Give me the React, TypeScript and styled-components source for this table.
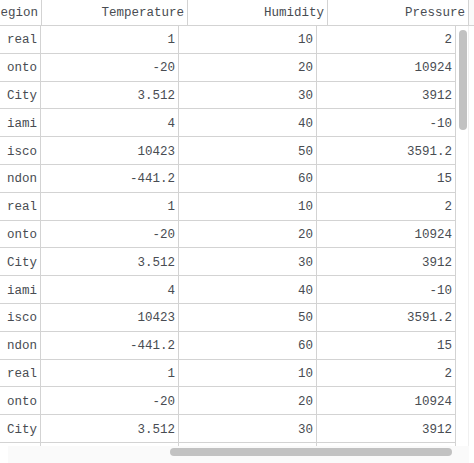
import React from "react";
import styled, { createGlobalStyle } from "styled-components";

const Global = createGlobalStyle`
  html, body { margin: 0; padding: 0; background: #ffffff; }
  * { box-sizing: border-box; }
`;

const Frame = styled.div`
  width: 474px;
  height: 463px;
  overflow: hidden;
  display: flex;
  flex-direction: column;
  font-family: "Liberation Mono", "Courier New", monospace;
  font-size: 12.5px;
  color: rgb(72, 76, 82);
  background: #ffffff;
`;

const HeaderRow = styled.div`
  display: flex;
  height: 26px;
  flex: none;
  border-bottom: 1px solid rgb(211, 211, 211);
`;

const HeaderCell = styled.div<{ $w: number }>`
  width: ${(p) => p.$w}px;
  flex: none;
  display: flex;
  align-items: center;
  justify-content: flex-end;
  padding: 0 3px 0 0;
  border-right: 1px solid rgb(211, 211, 211);
  white-space: nowrap;
  overflow: hidden;
`;

const HeaderFill = styled.div`
  flex: 1;
  background: #fafafa;
`;

const BodyArea = styled.div`
  display: flex;
  height: 420px;
  flex: none;
  overflow: hidden;
`;

const Rows = styled.div`
  width: 456px;
  flex: none;
  display: flex;
  flex-direction: column;
`;

const Row = styled.div`
  display: flex;
  height: 27.8px;
  flex: none;
  border-bottom: 1px solid rgb(211, 211, 211);
`;

const Cell = styled.div<{ $w: number }>`
  width: ${(p) => p.$w}px;
  flex: none;
  display: flex;
  align-items: center;
  justify-content: flex-end;
  padding: 2px 3px 0 0;
  border-right: 1px solid rgb(211, 211, 211);
  white-space: nowrap;
  overflow: hidden;
`;

const VTrack = styled.div`
  flex: 1;
  padding: 4px 0 0 3px;
  border-right: 1px solid #f0f0f0;
  margin-right: 5px;
`;

const VThumb = styled.div`
  width: 8px;
  height: 100px;
  border-radius: 4px;
  background: #c2c2c2;
`;

const HTrack = styled.div`
  flex: 1;
  margin-left: 8px;
  margin-right: 5px;
  background: #fafafa;
  padding-top: 2px;
  padding-left: 162px;
`;

const HThumb = styled.div`
  width: 282px;
  height: 8px;
  border-radius: 4px;
  background: #c2c2c2;
`;

const headerWidths = [42, 146, 140, 141];
const bodyWidths = [41, 138, 138, 139];
const headers = ["egion", "Temperature", "Humidity", "Pressure"];

const base: string[][] = [
  ["real", "1", "10", "2"],
  ["onto", "-20", "20", "10924"],
  ["City", "3.512", "30", "3912"],
  ["iami", "4", "40", "-10"],
  ["isco", "10423", "50", "3591.2"],
  ["ndon", "-441.2", "60", "15"],
];

const data: string[][] = Array.from({ length: 16 }, (_, i) =>
  i < 15 ? base[i % 6] : ["", "", "", ""]
);

export default function App() {
  return (
    <>
      <Global />
      <Frame>
        <HeaderRow>
          {headers.map((h, i) => (
            <HeaderCell key={h} $w={headerWidths[i]}>
              {h}
            </HeaderCell>
          ))}
          <HeaderFill />
        </HeaderRow>
        <BodyArea>
          <Rows>
            {data.map((r, ri) => (
              <Row key={ri}>
                {r.map((v, ci) => (
                  <Cell key={ci} $w={bodyWidths[ci]}>
                    {v}
                  </Cell>
                ))}
              </Row>
            ))}
          </Rows>
          <VTrack>
            <VThumb />
          </VTrack>
        </BodyArea>
        <HTrack>
          <HThumb />
        </HTrack>
      </Frame>
    </>
  );
}
